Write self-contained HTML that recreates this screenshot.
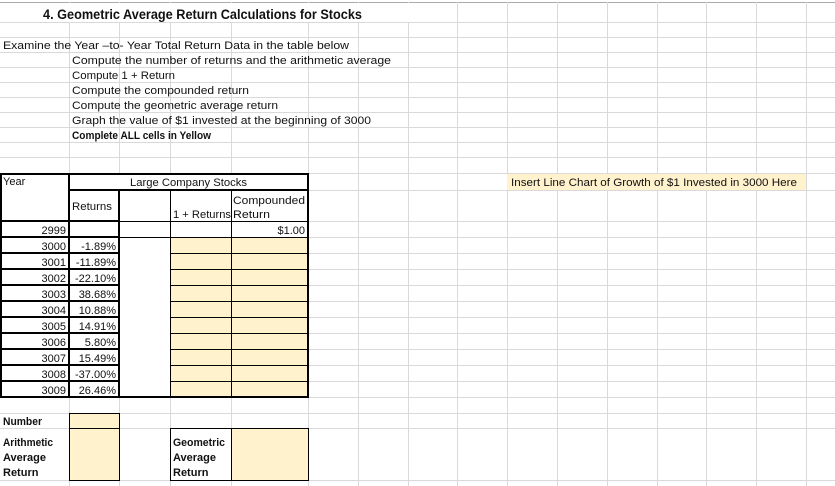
<!DOCTYPE html>
<html><head><meta charset="utf-8"><style>
html,body{margin:0;padding:0;background:#fff;width:835px;height:486px;overflow:hidden}
svg text{font-family:"Liberation Sans",sans-serif;font-size:11px;fill:#111}
</style></head><body>
<svg width="835" height="486" xmlns="http://www.w3.org/2000/svg">
<g stroke="#d9d9d9" stroke-width="1">
<line x1="0" y1="2.5" x2="835" y2="2.5" stroke="#aaa"/>
<line x1="0" y1="22.5" x2="835" y2="22.5"/><line x1="0" y1="37.5" x2="835" y2="37.5"/><line x1="0" y1="52.5" x2="835" y2="52.5"/><line x1="0" y1="67.5" x2="835" y2="67.5"/><line x1="0" y1="82.5" x2="835" y2="82.5"/><line x1="0" y1="97.5" x2="835" y2="97.5"/><line x1="0" y1="112.5" x2="835" y2="112.5"/><line x1="0" y1="127.5" x2="835" y2="127.5"/><line x1="0" y1="142.5" x2="835" y2="142.5"/><line x1="0" y1="157.5" x2="835" y2="157.5"/><line x1="0" y1="173.5" x2="835" y2="173.5"/><line x1="0" y1="190.5" x2="835" y2="190.5"/><line x1="0" y1="221.5" x2="835" y2="221.5"/>
<line x1="0" y1="237.5" x2="835" y2="237.5"/><line x1="0" y1="253.5" x2="835" y2="253.5"/><line x1="0" y1="269.5" x2="835" y2="269.5"/><line x1="0" y1="285.5" x2="835" y2="285.5"/><line x1="0" y1="301.5" x2="835" y2="301.5"/><line x1="0" y1="317.5" x2="835" y2="317.5"/><line x1="0" y1="333.5" x2="835" y2="333.5"/><line x1="0" y1="349.5" x2="835" y2="349.5"/><line x1="0" y1="365.5" x2="835" y2="365.5"/><line x1="0" y1="381.5" x2="835" y2="381.5"/><line x1="0" y1="397.5" x2="835" y2="397.5"/><line x1="0" y1="413.5" x2="835" y2="413.5"/><line x1="0" y1="428.5" x2="835" y2="428.5"/><line x1="0" y1="480.5" x2="835" y2="480.5"/>
<line x1="69.5" y1="2" x2="69.5" y2="486"/><line x1="119.5" y1="2" x2="119.5" y2="486"/><line x1="170.5" y1="2" x2="170.5" y2="486"/><line x1="231.5" y1="2" x2="231.5" y2="486"/><line x1="308.5" y1="2" x2="308.5" y2="486"/><line x1="358.5" y1="2" x2="358.5" y2="486"/><line x1="408.5" y1="2" x2="408.5" y2="486"/><line x1="457.5" y1="2" x2="457.5" y2="486"/><line x1="507.5" y1="2" x2="507.5" y2="486"/><line x1="557.5" y1="2" x2="557.5" y2="486"/><line x1="607.5" y1="2" x2="607.5" y2="486"/><line x1="657.5" y1="2" x2="657.5" y2="486"/><line x1="706.5" y1="2" x2="706.5" y2="486"/><line x1="756.5" y1="2" x2="756.5" y2="486"/><line x1="806.5" y1="2" x2="806.5" y2="486"/>
</g>
<rect x="1" y="3" width="420" height="19" fill="#fff"/>
<rect x="0" y="174" width="308" height="224" fill="#fff"/>
<rect x="0" y="429" width="69" height="51" fill="#fff"/>
<rect x="171" y="429" width="60" height="51" fill="#fff"/>
<rect x="507" y="174" width="299" height="16" fill="#fff2cc"/>
<rect x="170" y="237" width="138" height="160" fill="#fff2cc"/>
<rect x="69" y="413" width="50" height="67" fill="#fff2cc"/>
<rect x="231" y="428" width="77" height="52" fill="#fff2cc"/>
<g stroke="#000" stroke-width="1" fill="none">
<line x1="170.5" y1="190" x2="170.5" y2="397"/><line x1="231.5" y1="190" x2="231.5" y2="397"/>
<line x1="119" y1="237.5" x2="308" y2="237.5"/><line x1="170" y1="253.5" x2="308" y2="253.5"/><line x1="170" y1="269.5" x2="308" y2="269.5"/><line x1="170" y1="285.5" x2="308" y2="285.5"/><line x1="170" y1="301.5" x2="308" y2="301.5"/><line x1="170" y1="317.5" x2="308" y2="317.5"/><line x1="170" y1="333.5" x2="308" y2="333.5"/><line x1="170" y1="349.5" x2="308" y2="349.5"/><line x1="170" y1="365.5" x2="308" y2="365.5"/><line x1="170" y1="381.5" x2="308" y2="381.5"/>
<line x1="119" y1="221.5" x2="308" y2="221.5"/>
<rect x="69.5" y="413.5" width="50" height="15"/><rect x="69.5" y="428.5" width="50" height="52"/>
<rect x="170.5" y="428.5" width="61" height="52"/><rect x="231.5" y="428.5" width="77" height="52"/>
</g>
<g stroke="#000" stroke-width="2" fill="none">
<rect x="1" y="174" width="307" height="223"/>
<line x1="69" y1="173" x2="69" y2="397"/><line x1="119" y1="190" x2="119" y2="397"/>
<line x1="69" y1="190" x2="308" y2="190"/>
<line x1="0" y1="221" x2="119" y2="221"/><line x1="0" y1="237" x2="119" y2="237"/><line x1="0" y1="253" x2="119" y2="253"/><line x1="0" y1="269" x2="119" y2="269"/><line x1="0" y1="285" x2="119" y2="285"/><line x1="0" y1="301" x2="119" y2="301"/><line x1="0" y1="317" x2="119" y2="317"/><line x1="0" y1="333" x2="119" y2="333"/><line x1="0" y1="349" x2="119" y2="349"/><line x1="0" y1="365" x2="119" y2="365"/><line x1="0" y1="381" x2="119" y2="381"/>
</g>
<g lengthAdjust="spacingAndGlyphs">
<text x="43" y="19" style="font-size:13.5px;font-weight:bold" textLength="319" lengthAdjust="spacingAndGlyphs">4. Geometric Average Return Calculations for Stocks</text>
<text x="3" y="49" textLength="346" lengthAdjust="spacingAndGlyphs">Examine the Year –to- Year Total Return Data in the table below</text>
<text x="72" y="64" textLength="319" lengthAdjust="spacingAndGlyphs">Compute the number of returns and the arithmetic average</text>
<text x="72" y="79" textLength="103" lengthAdjust="spacingAndGlyphs">Compute 1 + Return</text>
<text x="72" y="94" textLength="177" lengthAdjust="spacingAndGlyphs">Compute the compounded return</text>
<text x="72" y="109" textLength="206" lengthAdjust="spacingAndGlyphs">Compute the geometric average return</text>
<text x="72" y="124" textLength="299" lengthAdjust="spacingAndGlyphs">Graph the value of $1 invested at the beginning of 3000</text>
<text x="72" y="139" style="font-weight:bold" textLength="139" lengthAdjust="spacingAndGlyphs">Complete ALL cells in Yellow</text>
<text x="511" y="186" textLength="286" lengthAdjust="spacingAndGlyphs">Insert Line Chart of Growth of $1 Invested in 3000 Here</text>
<text x="3" y="185">Year</text>
<text x="130" y="186" textLength="117" lengthAdjust="spacingAndGlyphs">Large Company Stocks</text>
<text x="72" y="210" textLength="40" lengthAdjust="spacingAndGlyphs">Returns</text>
<text x="233" y="204" textLength="72" lengthAdjust="spacingAndGlyphs">Compounded</text>
<text x="233" y="218" textLength="37" lengthAdjust="spacingAndGlyphs">Return</text>
<text x="173" y="218" textLength="58" lengthAdjust="spacingAndGlyphs">1 + Returns</text>
<text x="305" y="234" text-anchor="end">$1.00</text>
</g>
<g text-anchor="end">
<text x="66" y="234">2999</text>
<text x="66" y="250">3000</text><text x="116" y="250">-1.89%</text>
<text x="66" y="266">3001</text><text x="116" y="266">-11.89%</text>
<text x="66" y="282">3002</text><text x="116" y="282">-22.10%</text>
<text x="66" y="298">3003</text><text x="116" y="298">38.68%</text>
<text x="66" y="314">3004</text><text x="116" y="314">10.88%</text>
<text x="66" y="330">3005</text><text x="116" y="330">14.91%</text>
<text x="66" y="346">3006</text><text x="116" y="346">5.80%</text>
<text x="66" y="362">3007</text><text x="116" y="362">15.49%</text>
<text x="66" y="378">3008</text><text x="116" y="378">-37.00%</text>
<text x="66" y="394">3009</text><text x="116" y="394">26.46%</text>
</g>
<g style="font-weight:bold">
<text x="3" y="425" textLength="39" lengthAdjust="spacingAndGlyphs">Number</text>
<text x="3" y="446" textLength="50" lengthAdjust="spacingAndGlyphs">Arithmetic</text><text x="3" y="461">Average</text><text x="3" y="476">Return</text>
<text x="173" y="446" textLength="52" lengthAdjust="spacingAndGlyphs">Geometric</text><text x="173" y="461">Average</text><text x="173" y="476">Return</text>
</g>
</svg>
</body></html>
